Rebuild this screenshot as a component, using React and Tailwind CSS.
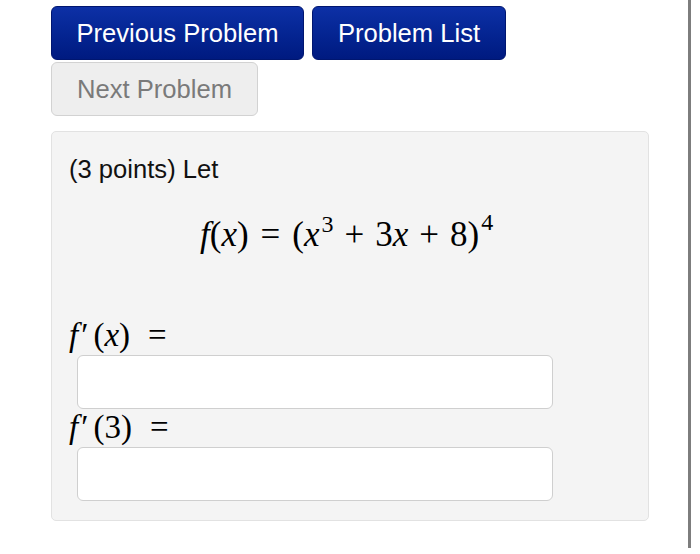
export default function App() {
  const sans = { fontFamily: '"Liberation Sans", Arial, sans-serif' };
  const serif = { fontFamily: '"Liberation Serif", "Times New Roman", serif' };
  return (
    <div className="flex w-[700px] h-[554px] bg-white overflow-hidden" style={sans}>
      <div className="w-[688px] pl-[51px] pt-[6px]">
        <div className="flex gap-[8px]">
          <button className="h-[54px] w-[253px] rounded-[6px] bg-gradient-to-b from-[#0d30a6] to-[#001a80] border border-[#001670] text-white text-[25.6px]">
            Previous Problem
          </button>
          <button className="h-[54px] w-[194px] rounded-[6px] bg-gradient-to-b from-[#0d30a6] to-[#001a80] border border-[#001670] text-white text-[25.6px]">
            Problem List
          </button>
        </div>
        <div className="mt-[2px]">
          <button className="h-[54px] w-[207px] rounded-[6px] bg-[#eeeeee] border border-[#d2d2d2] text-[#7a7a7a] text-[25.6px]">
            Next Problem
          </button>
        </div>

        <div className="mt-[15px] w-[598px] h-[390px] rounded-[5px] bg-[#f4f4f4] border border-[#e2e2e2] pl-[17px] pt-[20px]">
          <div className="text-[25.6px] leading-[34px] text-[#111]">(3 points) Let</div>

          <div className="mt-[26px] ml-[131px] text-[35px] leading-[46px] text-black whitespace-nowrap" style={serif}>
            <i>f</i>(<i>x</i>)<span className="mx-[12px]">=</span>(<i>x</i>
            <span className="inline-block text-[24px] relative top-[-14px] ml-[2px]">3</span>
            <span className="mx-[11px]">+</span>3<i>x</i>
            <span className="mx-[11px]">+</span>8)
            <span className="inline-block text-[24px] relative top-[-16px] ml-[2px]">4</span>
          </div>

          <div className="mt-[56px] text-[33px] leading-[36px] text-black whitespace-nowrap" style={serif}>
            <i>f</i>
            <span className="ml-[3px] mr-[5px]">′</span>(<i>x</i>)<span className="ml-[18px]">=</span>
          </div>
          <input className="block mt-[2px] ml-[8px] w-[476px] h-[54px] rounded-[6px] bg-white border border-[#cfcfcf] outline-none" />

          <div className="mt-[0px] text-[33px] leading-[36px] text-black whitespace-nowrap" style={serif}>
            <i>f</i>
            <span className="ml-[3px] mr-[5px]">′</span>(3)<span className="ml-[18px]">=</span>
          </div>
          <input className="block mt-[2px] ml-[8px] w-[476px] h-[54px] rounded-[6px] bg-white border border-[#cfcfcf] outline-none" />
        </div>
      </div>
      <div className="w-[3px] h-[548px] bg-[#7d7d7d]" />
    </div>
  );
}
